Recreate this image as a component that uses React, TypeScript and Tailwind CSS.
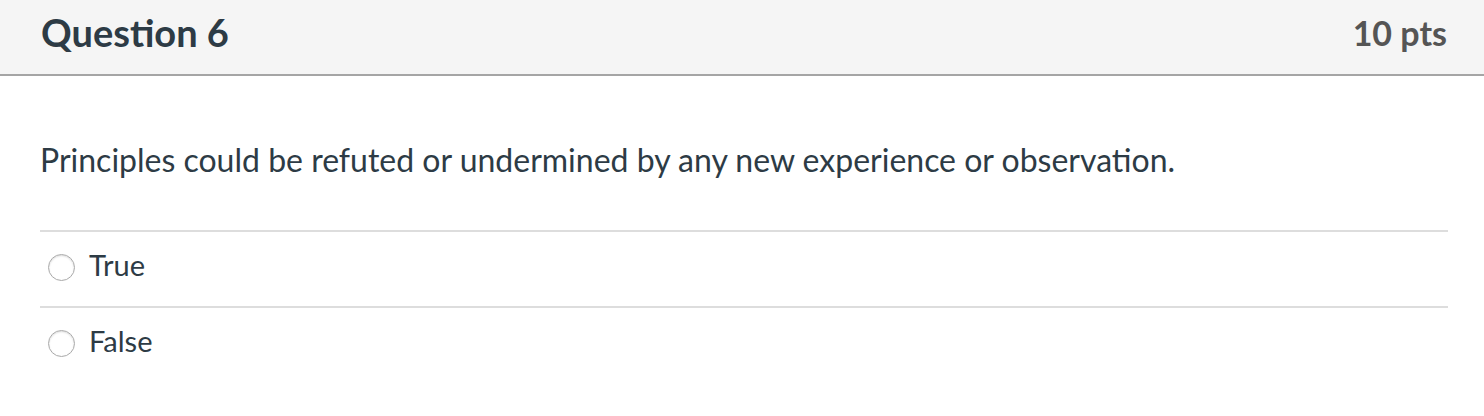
export default function App() {
  return (
    <div className="w-[1484px] h-[416px] bg-white" style={{ fontFamily: "Lato, 'Noto Sans', sans-serif" }}>
      <div className="h-[76px] bg-[#f5f5f5] border-b-2 border-[#a5a5a5] flex items-center justify-between pl-[41px] pr-[37px]">
        <h2 className="text-[38px] font-bold text-[#2d3b45] leading-none -mt-[10px]">Question 6</h2>
        <div className="text-[34px] font-bold text-[#555555] leading-none -mt-[8px]">10 pts</div>
      </div>
      <div className="pl-[40px] pr-[36px]">
        <p className="pt-[64px] text-[32px] text-[#2d3b45] leading-[40px]">
          Principles could be refuted or undermined by any new experience or observation.
        </p>
        <div className="mt-[50px] border-t-2 border-[#dddddd]">
          <label className="h-[74px] pb-[4px] flex items-center gap-[14px] pl-[8px]">
            <span className="w-[27px] h-[27px] rounded-full border border-[#aaaaaa] bg-white shadow-[inset_0_1px_2px_rgba(0,0,0,0.15)]" />
            <span className="text-[29px] text-[#2d3b45] -mt-[4px]">True</span>
          </label>
        </div>
        <div className="border-t-2 border-[#dddddd]">
          <label className="h-[74px] pb-[4px] flex items-center gap-[14px] pl-[8px]">
            <span className="w-[27px] h-[27px] rounded-full border border-[#aaaaaa] bg-white shadow-[inset_0_1px_2px_rgba(0,0,0,0.15)]" />
            <span className="text-[29px] text-[#2d3b45] -mt-[4px]">False</span>
          </label>
        </div>
      </div>
    </div>
  );
}
